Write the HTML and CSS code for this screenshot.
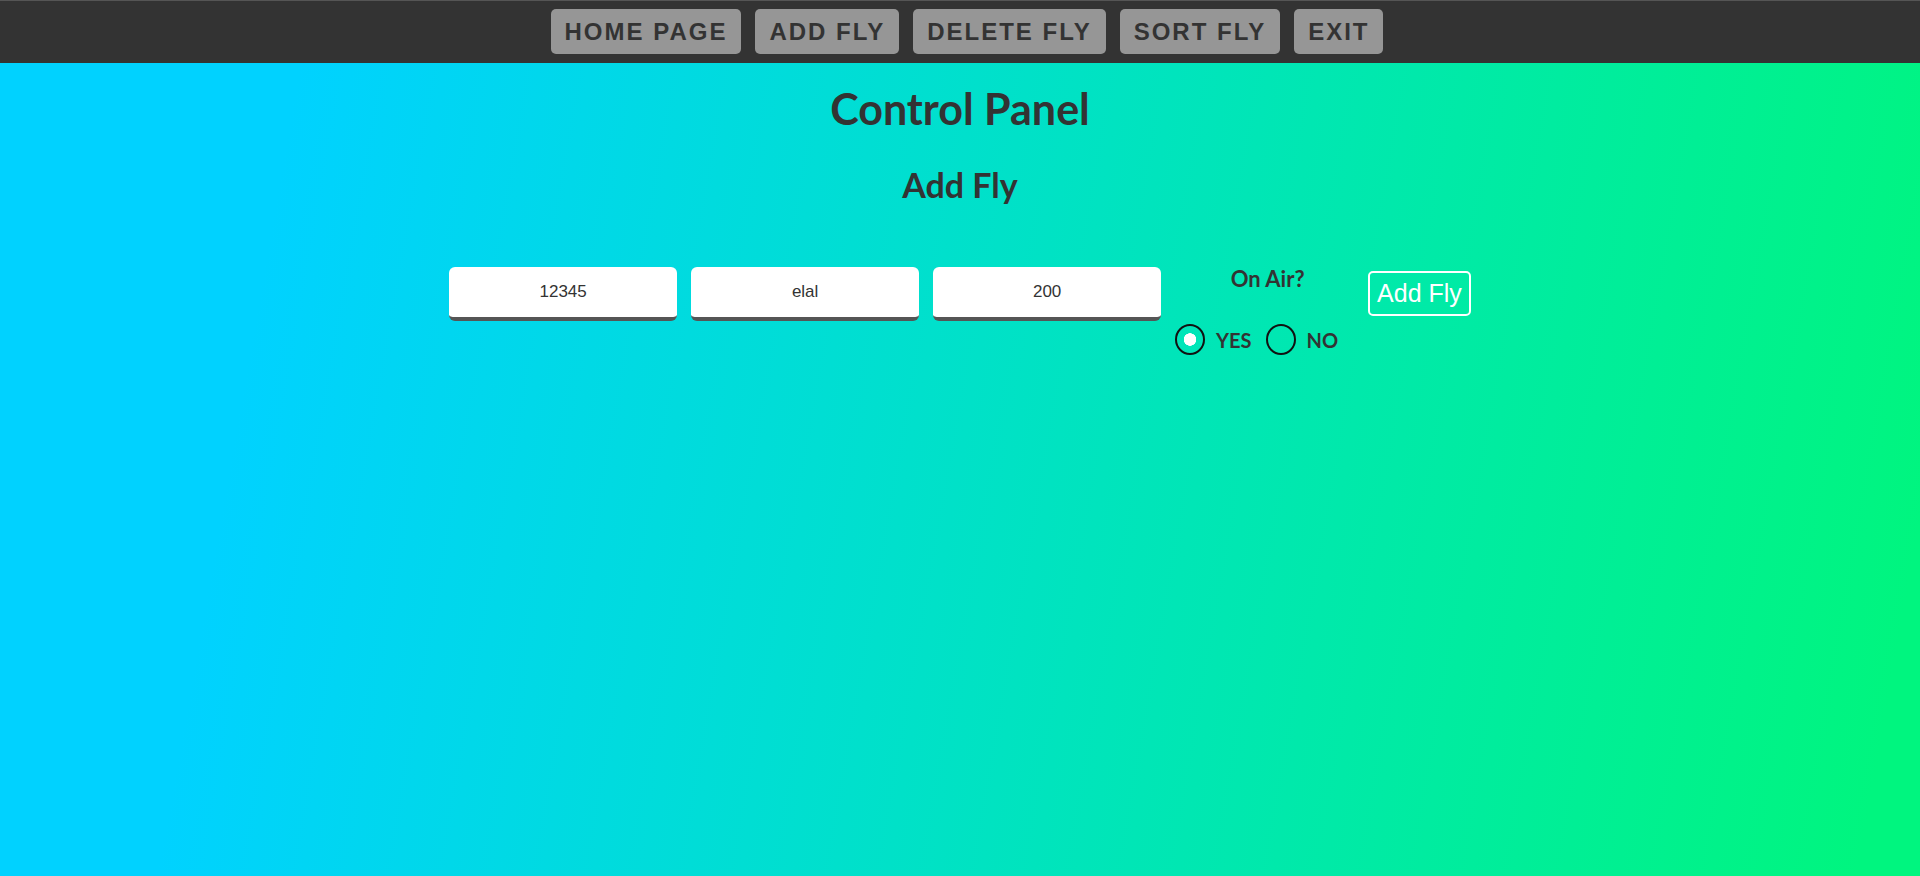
FILE: index.html
```html
<!DOCTYPE html>
<html lang="en">
<head>
<meta charset="utf-8">
<title>Control Panel - Add Fly</title>
<link rel="stylesheet" href="styles.css">
</head>
<body>
<nav class="topnav">
  <button class="nav-btn">HOME PAGE</button>
  <button class="nav-btn">ADD FLY</button>
  <button class="nav-btn">DELETE FLY</button>
  <button class="nav-btn">SORT FLY</button>
  <button class="nav-btn">EXIT</button>
</nav>
<main class="panel">
  <h1 class="panel-title">Control Panel</h1>
  <h2 class="panel-subtitle">Add Fly</h2>
  <form class="fly-form">
    <input class="fly-input" type="text" value="12345">
    <input class="fly-input" type="text" value="elal">
    <input class="fly-input" type="text" value="200">
    <div class="onair">
      <div class="onair-label">On Air?</div>
      <div class="onair-options">
        <label class="radio-opt"><input class="radio" type="radio" name="onair" checked><span>YES</span></label>
        <label class="radio-opt"><input class="radio" type="radio" name="onair"><span>NO</span></label>
      </div>
    </div>
    <button class="submit-btn" type="button">Add Fly</button>
  </form>
</main>
</body>
</html>
```
FILE: styles.css
```css
html {
  height: 100%;
}
body {
  margin: 0;
  min-height: 100vh;
  background: linear-gradient(100deg, #00d2ff 15%, #00f57f 97%);
  font-family: Lato, "Open Sans", sans-serif;
  color: #333;
}
.topnav {
  display: flex;
  justify-content: center;
  gap: 14px;
  background: #333;
  border-top: 1px solid #555;
  padding: 8px 0 9px 14px;
}
.nav-btn {
  height: 45px;
  padding: 0 14px;
  border: none;
  border-radius: 5px;
  background: #969696;
  color: #333;
  font-family: "Liberation Sans", Arial, sans-serif;
  font-weight: bold;
  font-size: 24px;
  letter-spacing: 2px;
  line-height: 45px;
}
.panel {
  display: flex;
  flex-direction: column;
  align-items: center;
}
.panel-title {
  margin: 20px 0 0;
  font-size: 43px;
  font-weight: 700;
  line-height: 51px;
}
.panel-subtitle {
  margin: 31px 0 0;
  font-size: 34px;
  font-weight: 700;
  line-height: 40px;
}
.fly-form {
  display: flex;
  align-items: flex-start;
  gap: 14px;
  margin-top: 62px;
}
.fly-input {
  box-sizing: border-box;
  width: 228px;
  height: 54px;
  border: none;
  border-bottom: 4px solid #555;
  border-radius: 6px;
  background: #fff;
  color: #333;
  font-family: "Liberation Sans", Arial, sans-serif;
  font-size: 17px;
  text-align: center;
  padding: 0;
  outline: none;
}
.onair {
  width: 179px;
  display: flex;
  flex-direction: column;
}
.onair-label {
  text-align: center;
  font-size: 22px;
  font-weight: 700;
  line-height: 24px;
  padding-left: 6px;
}
.onair-options {
  display: flex;
  align-items: center;
  margin-top: 33px;
}
.radio-opt {
  display: flex;
  align-items: center;
  gap: 11px;
  margin-right: 14px;
  font-size: 20px;
  font-weight: 700;
  line-height: 24px;
}
.radio {
  appearance: none;
  -webkit-appearance: none;
  box-sizing: border-box;
  width: 30px;
  height: 31px;
  margin: 0;
  border: 2px solid #111;
  border-radius: 50%;
  background: transparent;
}
.radio:checked {
  background: radial-gradient(circle, #fff 0 6px, transparent 6.5px);
}
.submit-btn {
  box-sizing: border-box;
  height: 45px;
  margin-top: 4px;
  padding: 0 7px;
  border: 2px solid #fff;
  border-radius: 5px;
  background: transparent;
  color: #fff;
  font-family: "Liberation Sans", Arial, sans-serif;
  font-size: 25px;
}
```
